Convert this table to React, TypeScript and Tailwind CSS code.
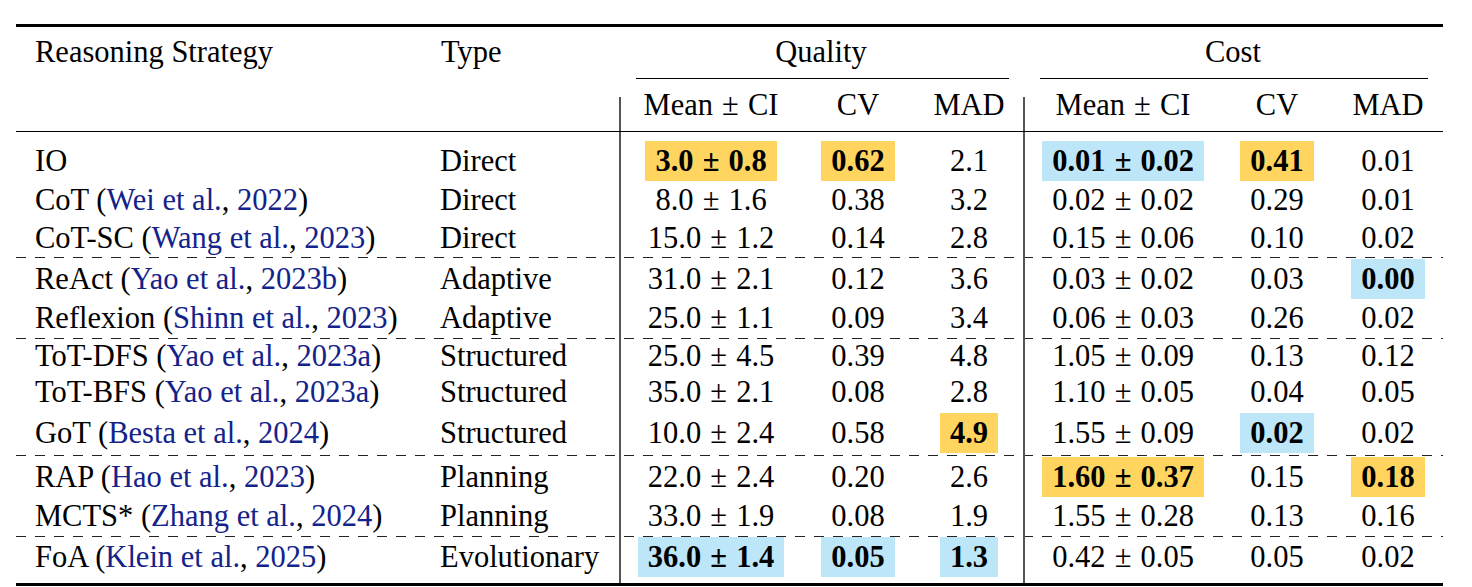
import React from "react";

type HL = "y" | "b" | undefined;
type Row = {
  name: string;
  cite?: [string, string];
  type: string;
  vals: string[];
  hl: HL[];
  h: string;
  pad: string;
  dash?: boolean;
};

const COLS = "grid grid-cols-[404px_199px_182px_114px_108px_198px_112px_110px]";
const DASH =
  "bg-[image:repeating-linear-gradient(to_right,#222_0px,#222_10px,transparent_10px,transparent_19px)] bg-[length:100%_1px] bg-no-repeat bg-top";

const rows: Row[] = [
  { name: "IO", type: "Direct", vals: ["3.0 ± 0.8", "0.62", "2.1", "0.01 ± 0.02", "0.41", "0.01"], hl: ["y", "y", undefined, "b", "y", undefined], h: "h-[40px]", pad: "" },
  { name: "CoT", cite: ["Wei et al.", "2022"], type: "Direct", vals: ["8.0 ± 1.6", "0.38", "3.2", "0.02 ± 0.02", "0.29", "0.01"], hl: [], h: "h-[37px]", pad: "" },
  { name: "CoT-SC", cite: ["Wang et al.", "2023"], type: "Direct", vals: ["15.0 ± 1.2", "0.14", "2.8", "0.15 ± 0.06", "0.10", "0.02"], hl: [], h: "h-[39px]", pad: "" },
  { name: "ReAct", cite: ["Yao et al.", "2023b"], type: "Adaptive", vals: ["31.0 ± 2.1", "0.12", "3.6", "0.03 ± 0.02", "0.03", "0.00"], hl: [undefined, undefined, undefined, undefined, undefined, "b"], h: "h-[42px]", pad: "pt-[1px]", dash: true },
  { name: "Reflexion", cite: ["Shinn et al.", "2023"], type: "Adaptive", vals: ["25.0 ± 1.1", "0.09", "3.4", "0.06 ± 0.03", "0.26", "0.02"], hl: [], h: "h-[39px]", pad: "pb-[2px]" },
  { name: "ToT-DFS", cite: ["Yao et al.", "2023a"], type: "Structured", vals: ["25.0 ± 4.5", "0.39", "4.8", "1.05 ± 0.09", "0.13", "0.12"], hl: [], h: "h-[35px]", pad: "pt-[1px]", dash: true },
  { name: "ToT-BFS", cite: ["Yao et al.", "2023a"], type: "Structured", vals: ["35.0 ± 2.1", "0.08", "2.8", "1.10 ± 0.05", "0.04", "0.05"], hl: [], h: "h-[38px]", pad: "" },
  { name: "GoT", cite: ["Besta et al.", "2024"], type: "Structured", vals: ["10.0 ± 2.4", "0.58", "4.9", "1.55 ± 0.09", "0.02", "0.02"], hl: [undefined, undefined, "y", undefined, "b", undefined], h: "h-[44px]", pad: "pt-[2px] pb-[2px]" },
  { name: "RAP", cite: ["Hao et al.", "2023"], type: "Planning", vals: ["22.0 ± 2.4", "0.20", "2.6", "1.60 ± 0.37", "0.15", "0.18"], hl: [undefined, undefined, undefined, "y", undefined, "y"], h: "h-[42px]", pad: "pt-[2px]", dash: true },
  { name: "MCTS*", cite: ["Zhang et al.", "2024"], type: "Planning", vals: ["33.0 ± 1.9", "0.08", "1.9", "1.55 ± 0.28", "0.13", "0.16"], hl: [], h: "h-[39px]", pad: "pb-[2px]" },
  { name: "FoA", cite: ["Klein et al.", "2025"], type: "Evolutionary", vals: ["36.0 ± 1.4", "0.05", "1.3", "0.42 ± 0.05", "0.05", "0.02"], hl: ["b", "b", "b", undefined, undefined, undefined], h: "h-[47px]", pad: "pt-[1px] pb-[6px]", dash: true },
];

function Num({ v }: { v: string }) {
  const parts = v.split(" ± ");
  if (parts.length < 2) return <>{v}</>;
  return (
    <>
      {parts[0]} <span className="mx-[1.5px]">±</span> {parts[1]}
    </>
  );
}

function Val({ v, hl }: { v: string; hl: HL }) {
  if (hl === "y")
    return (
      <span className="inline-block h-[40px] leading-[40px] px-[10px] font-bold bg-[#FFD55F]">
        <Num v={v} />
      </span>
    );
  if (hl === "b")
    return (
      <span className="inline-block h-[40px] leading-[40px] px-[10px] font-bold bg-[#BDE6F9]">
        <Num v={v} />
      </span>
    );
  return (
    <span className="leading-[30px]">
      <Num v={v} />
    </span>
  );
}

function DataRow({ r }: { r: Row }) {
  const cls = `${COLS} ${r.h} ${r.dash ? DASH : ""}`;
  const borderIdx = [0, 3];
  return (
    <div className={cls}>
      <div className={`flex items-center pl-[19px] leading-[30px] ${r.pad}`}>
        <span>
          {r.name}
          {r.cite && (
            <>
              {" ("}
              <span className="text-[#14238A]">{r.cite[0]}</span>
              {", "}
              <span className="text-[#14238A]">{r.cite[1]}</span>
              {")"}
            </>
          )}
        </span>
      </div>
      <div className={`flex items-center pl-[20px] leading-[30px] ${r.pad}`}>
        <span>{r.type}</span>
      </div>
      {r.vals.map((v, i) => (
        <div
          key={i}
          className={`flex items-center justify-center ${borderIdx.includes(i) ? "border-l-2 border-[#555]" : ""} ${r.pad}`}
        >
          <Val v={v} hl={r.hl[i]} />
        </div>
      ))}
    </div>
  );
}

const VLINE =
  "bg-[image:linear-gradient(#555,#555)] bg-[length:2px_34px] bg-no-repeat bg-left-bottom pl-[2px]";

function MeanCI() {
  return (
    <span>
      Mean <span className="mx-[1.5px]">±</span> CI
    </span>
  );
}

export default function App() {
  return (
    <div className="w-[1472px] h-[587px] bg-white text-black font-['Liberation_Serif',serif] text-[30.5px] whitespace-nowrap overflow-hidden">
      <div className="pt-[24px] pl-[16px] w-[1443px]">
        <div className="h-[2.5px] bg-black" />
        <div className={`${COLS} h-[51.5px] items-center leading-[30px]`}>
          <div className="pl-[19px]">Reasoning Strategy</div>
          <div className="pl-[21px]">Type</div>
          <div className="col-span-3 text-center">Quality</div>
          <div className="col-span-3 text-center">Cost</div>
        </div>
        <div className={`${COLS} h-[1px]`}>
          <div className="col-start-3 col-span-3 ml-[17px] mr-[14px] bg-black" />
          <div className="col-span-3 ml-[17px] mr-[15px] bg-black" />
        </div>
        <div className={`${COLS} h-[51.5px] leading-[30px]`}>
          <div />
          <div />
          <div className={`flex items-center justify-center ${VLINE}`}>
            <MeanCI />
          </div>
          <div className="flex items-center justify-center">CV</div>
          <div className="flex items-center justify-center">MAD</div>
          <div className={`flex items-center justify-center ${VLINE}`}>
            <MeanCI />
          </div>
          <div className="flex items-center justify-center">CV</div>
          <div className="flex items-center justify-center">MAD</div>
        </div>
        <div className="h-[1.5px] bg-black" />
        <div className={`${COLS} h-[9px]`}>
          <div />
          <div />
          <div className="border-l-2 border-[#555]" />
          <div />
          <div />
          <div className="border-l-2 border-[#555]" />
        </div>
        {rows.map((r, i) => (
          <DataRow key={i} r={r} />
        ))}
        <div className="h-[2.5px] bg-black" />
      </div>
    </div>
  );
}
